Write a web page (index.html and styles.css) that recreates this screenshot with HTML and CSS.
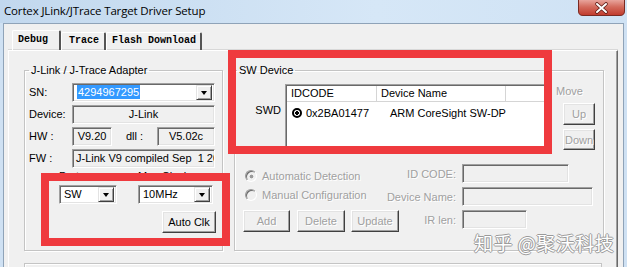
FILE: index.html
```html
<!DOCTYPE html>
<html lang="en">
<head>
  <meta charset="UTF-8" />
  <title>Cortex JLink/JTrace Target Driver Setup</title>
  <link rel="stylesheet" href="styles.css">
</head>
<body>
  <div class="titlebar">
    <span class="title">Cortex JLink/JTrace Target Driver Setup</span>
    <span class="close">
      <svg width="47" height="16" viewBox="0 0 47 16">
        <defs>
          <linearGradient id="cg" x1="0" y1="0" x2="0" y2="1">
            <stop offset="0" stop-color="#e8a49c"/>
            <stop offset="0.45" stop-color="#d36a5c"/>
            <stop offset="1" stop-color="#c0392b"/>
          </linearGradient>
        </defs>
        <path d="M0.5 0 V11 Q0.5 15.5 5 15.5 H42 Q46.5 15.5 46.5 11 V0" fill="url(#cg)" stroke="#7a2a22"/>
        <path d="M19 4 L28 12 M28 4 L19 12" stroke="#5a1a14" stroke-width="3.6" stroke-linecap="round"/>
        <path d="M19 4 L28 12 M28 4 L19 12" stroke="#fff" stroke-width="2" stroke-linecap="round"/>
      </svg>
    </span>
  </div>

  <div class="dialog">
    <div class="tabs">
      <span class="tab active">Debug</span>
      <span class="tab">Trace</span>
      <span class="tab wide">Flash Download</span>
    </div>

    <div class="page">
      <div class="cols">
        <fieldset class="group adapter">
          <legend>J-Link / J-Trace Adapter</legend>
          <div class="adapter-grid">
            <span class="lbl">SN:</span>
            <div class="combo white">
              <span class="combo-text"><span class="sel">4294967295</span></span>
              <span class="drop"><i></i></span>
            </div>
            <span class="lbl">Device:</span>
            <div class="field center">J-Link</div>
            <span class="lbl">HW :</span>
            <div class="hw-row">
              <div class="field center hw">V9.20</div>
              <span class="lbl">dll :</span>
              <div class="field center dll">V5.02c</div>
            </div>
            <span class="lbl">FW :</span>
            <div class="field clip">J-Link V9 compiled Sep&nbsp;&nbsp;1 20</div>
          </div>

          <div class="clock">
            <div class="clock-item port">
              <span class="lbl">Port:</span>
              <div class="combo white">
                <span class="combo-text">SW</span>
                <span class="drop"><i></i></span>
              </div>
            </div>
            <div class="clock-item maxclk">
              <span class="lbl">Max Clock:</span>
              <div class="combo white">
                <span class="combo-text">10MHz</span>
                <span class="drop"><i></i></span>
              </div>
            </div>
          </div>
          <div class="autoclk-row">
            <span class="btn autoclk">Auto Clk</span>
          </div>
        </fieldset>

        <fieldset class="group swdev">
          <legend>SW Device</legend>
          <div class="top-row">
            <span class="swd">SWD</span>
            <div class="listview">
              <div class="lv-head">
                <span class="c1">IDCODE</span>
                <span class="c2">Device Name</span>
                <span class="c3"></span>
              </div>
              <div class="lv-row">
                <span class="c1"><i class="dot"></i>0x2BA01477</span>
                <span class="c2">ARM CoreSight SW-DP</span>
              </div>
            </div>
            <div class="move">
              <span class="dis">Move</span>
              <span class="btn dis up">Up</span>
              <span class="btn dis down">Down</span>
            </div>
          </div>

          <div class="lower-row">
            <div class="detect">
              <div class="radio dis"><i class="rb on"></i>Automatic Detection</div>
              <div class="radio dis"><i class="rb"></i>Manual Configuration</div>
              <div class="btn-row">
                <span class="btn dis add">Add</span>
                <span class="btn dis del">Delete</span>
                <span class="btn dis upd">Update</span>
              </div>
            </div>
            <div class="idgrid">
              <span class="dis">ID CODE:</span>
              <div class="field w1"></div>
              <span class="dis">Device Name:</span>
              <div class="field w2"></div>
              <span class="dis">IR len:</span>
              <div class="field w3"></div>
            </div>
          </div>
        </fieldset>
      </div>

      <div class="next-group"></div>
    </div>
  </div>

  <div class="mark mark-left"></div>
  <div class="mark mark-right"></div>
  <div class="watermark">知乎 @聚沃科技</div>
</body>
</html>
```

FILE: styles.css
```css
:root {
  --face: #f0f0f0;
  --shadow: #a0a0a0;
  --dark: #696969;
  --light: #e3e3e3;
  --disabled: #a0a0a0;
  --mark: #ef3a3e;
}

body {
  margin: 0;
  width: 627px;
  height: 267px;
  overflow: hidden;
  position: relative;
  background: #cfe1f3;
  font: 11px "Liberation Sans", Arial, sans-serif;
  color: #000;
}

.titlebar {
  height: 23px;
  display: flex;
  justify-content: space-between;
  align-items: flex-start;
  background: linear-gradient(to right, #c2d8ee, #d6e7f7 60%, #cfe2f4);
}

.title {
  font: 11.5px "Open Sans", "Noto Sans", sans-serif;
  line-height: 21px;
  padding-left: 4px;
  letter-spacing: -0.15px;
  color: #000;
}

.close {
  display: block;
  width: 47px;
  height: 16px;
  margin-right: 2px;
}

.close svg {
  display: block;
}

.dialog {
  margin-left: 3px;
  width: 621px;
  height: 244px;
  overflow: hidden;
  box-sizing: border-box;
  background: var(--face);
  border: 1px solid #8fa3b8;
  border-bottom: none;
}

/* tabs */
.tabs {
  display: flex;
  margin: 6px 0 0 8px;
  height: 20px;
  align-items: flex-end;
}

.tab {
  height: 18px;
  box-sizing: border-box;
  border-top: 1px solid #fff;
  border-left: 1px solid #fff;
  border-right: 2px solid #555;
  border-radius: 2px 2px 0 0;
  font: bold 10px "Liberation Mono", "Courier New", monospace;
  line-height: 16px;
  padding-left: 7px;
  width: 45px;
}

.tab.active {
  width: 49px;
  height: 20px;
  padding-left: 5px;
  line-height: 18px;
}

.tab.wide {
  width: 96px;
  padding-left: 5px;
}

.page {
  margin-left: 4px;
  width: 610px;
  height: 217px;
  box-sizing: border-box;
  border-top: 1px solid #fff;
  border-left: 1px solid #fff;
  border-right: 1px solid var(--dark);
  box-shadow: inset -1px 0 0 var(--shadow), 0 -1px 0 #d8d8d8;
  padding: 12px 0 0 15px;
  overflow: hidden;
}

.cols {
  display: flex;
  gap: 11px;
}

/* group boxes */
.group {
  margin: 0;
  padding: 0;
  box-sizing: border-box;
  height: 188px;
  border: 1px solid #c4c4c4;
  box-shadow: inset 1px 1px 0 #fff, 1px 1px 0 #fff;
  min-width: 0;
}

.group legend {
  padding: 0 2px;
  margin-left: 4px;
  line-height: 14px;
}

.adapter {
  width: 199px;
}

.swdev {
  width: 370px;
}

.swdev legend {
  margin-left: 2px;
}

.lbl {
  line-height: 19px;
  white-space: nowrap;
}

.adapter-grid {
  display: grid;
  grid-template-columns: 43px 143px;
  grid-auto-rows: 19px;
  row-gap: 3px;
  margin: 6px 0 0 4px;
}

/* sunken fields */
.field {
  height: 19px;
  box-sizing: border-box;
  border-top: 1px solid var(--shadow);
  border-left: 1px solid var(--shadow);
  border-right: 1px solid #fff;
  border-bottom: 1px solid #fff;
  box-shadow: inset 1px 1px 0 var(--dark), inset -1px -1px 0 var(--light);
  line-height: 17px;
  padding: 0 4px;
  white-space: nowrap;
  overflow: hidden;
}

.field.center {
  text-align: center;
}

.field.clip {
  padding-left: 3px;
}

.hw-row {
  display: flex;
  justify-content: space-between;
}

.hw {
  width: 40px;
}

.dll {
  width: 58px;
}

/* combo boxes */
.combo {
  height: 19px;
  box-sizing: border-box;
  display: flex;
  align-items: center;
  border-top: 1px solid var(--shadow);
  border-left: 1px solid var(--shadow);
  border-right: 1px solid #fff;
  border-bottom: 1px solid #fff;
  box-shadow: inset 1px 1px 0 var(--dark), inset -1px -1px 0 var(--light);
  background: #fff;
  padding: 2px;
}

.combo-text {
  flex: 1;
  padding-left: 2px;
  line-height: 15px;
  overflow: hidden;
  white-space: nowrap;
}

.sel {
  background: #3399ff;
  color: #fff;
  padding: 0 1px;
  display: inline-block;
  line-height: 14px;
}

.drop {
  width: 16px;
  height: 15px;
  box-sizing: border-box;
  background: var(--face);
  border-top: 1px solid var(--light);
  border-left: 1px solid var(--light);
  border-right: 1px solid #404040;
  border-bottom: 1px solid #404040;
  box-shadow: inset 1px 1px 0 #fff, inset -1px -1px 0 var(--shadow);
  display: flex;
  justify-content: center;
  align-items: center;
}

.drop i {
  width: 0;
  height: 0;
  border-left: 3px solid transparent;
  border-right: 3px solid transparent;
  border-top: 4px solid #000;
  margin-top: 1px;
}

/* clock */
.clock {
  display: flex;
  gap: 21px;
  margin: 2px 0 0 34px;
}

.clock-item {
  display: flex;
  flex-direction: column;
  gap: 2px;
}

.clock-item .lbl {
  line-height: 13px;
}

.port {
  width: 58px;
}

.maxclk {
  width: 75px;
}

.autoclk-row {
  display: flex;
  justify-content: flex-end;
  padding-right: 6px;
  margin-top: 7px;
}

/* buttons */
.btn {
  display: flex;
  justify-content: center;
  align-items: center;
  box-sizing: border-box;
  background: var(--face);
  border-top: 1px solid #fff;
  border-left: 1px solid #fff;
  border-right: 1px solid #404040;
  border-bottom: 1px solid #404040;
  box-shadow: inset -1px -1px 0 var(--shadow), inset 1px 1px 0 var(--light);
  white-space: nowrap;
}

.autoclk {
  width: 54px;
  height: 22px;
}

.dis {
  color: var(--disabled);
  text-shadow: 1px 1px 0 #fff;
  white-space: nowrap;
}

/* sw device */
.top-row {
  display: flex;
  margin-top: 7px;
  height: 66px;
}

.swd {
  width: 46px;
  text-align: right;
  padding-top: 19px;
  line-height: 14px;
}

.listview {
  margin-left: 4px;
  width: 263px;
  height: 66px;
  box-sizing: border-box;
  background: #fff;
  border-top: 1px solid var(--shadow);
  border-left: 1px solid var(--shadow);
  box-shadow: inset 1px 1px 0 var(--dark);
  overflow: hidden;
}

.lv-head {
  display: flex;
  height: 16px;
  box-sizing: border-box;
  border-bottom: 1px solid #d5d5d5;
  margin-left: 1px;
  margin-top: 1px;
  line-height: 14px;
}

.lv-head span {
  box-sizing: border-box;
  border-right: 1px solid #d5d5d5;
  padding-left: 4px;
}

.c1 {
  width: 90px;
  flex: none;
}

.c2 {
  width: 129px;
  flex: none;
}

.c3 {
  flex: 1;
}

.lv-row {
  display: flex;
  margin-left: 1px;
  margin-top: 4px;
  line-height: 14px;
}

.lv-row .c1 {
  display: flex;
  align-items: center;
  padding-left: 5px;
}

.lv-row .c2 {
  padding-left: 8px;
  width: 160px;
}

.dot {
  width: 10px;
  height: 10px;
  box-sizing: border-box;
  border: 2px solid #000;
  border-radius: 50%;
  margin-right: 4px;
  background: radial-gradient(circle, #000 1.6px, #fff 2px);
}

.move {
  margin-left: 8px;
  width: 40px;
  display: flex;
  flex-direction: column;
  line-height: 14px;
}

.move .btn {
  margin-left: 7px;
  width: 32px;
  height: 22px;
}

.move .up {
  margin-top: 5px;
}

.move .down {
  margin-top: 4px;
  height: 21px;
}

/* lower part */
.lower-row {
  display: flex;
  margin-top: 14px;
}

.detect {
  flex: none;
  width: 132px;
  padding: 2px 0 0 8px;
}

.radio {
  display: flex;
  align-items: center;
  height: 19px;
  padding-left: 2px;
}

.rb {
  width: 12px;
  height: 12px;
  box-sizing: border-box;
  border-radius: 50%;
  border: 1px solid;
  border-color: #9a9a9a #fff #fff #9a9a9a;
  background: var(--face);
  margin-right: 5px;
  box-shadow: inset 1px 1px 0 #6a6a6a;
}

.rb.on {
  background: radial-gradient(circle at 55% 55%, #9a9a9a 1.6px, var(--face) 2.2px);
}

.btn-row {
  display: flex;
  margin-top: 6px;
}

.btn-row .btn {
  height: 22px;
  flex: none;
}

.add {
  width: 47px;
}

.del {
  width: 48px;
  margin-left: 7px;
}

.upd {
  width: 48px;
  margin-left: 6px;
}

.idgrid {
  margin-left: auto;
  margin-right: 10px;
  display: grid;
  grid-template-columns: auto auto;
  grid-auto-rows: 19px;
  column-gap: 6px;
  row-gap: 4px;
  align-items: center;
  justify-items: end;
}

.idgrid .field {
  justify-self: start;
}

.w1 {
  width: 107px;
}

.w2 {
  width: 131px;
}

.w3 {
  width: 65px;
}

.next-group {
  margin-top: 12px;
  width: 576px;
  height: 20px;
  border: 1px solid #c4c4c4;
  box-shadow: inset 1px 1px 0 #fff;
}

/* annotation marks drawn over the dialog */
.mark {
  position: absolute;
  box-sizing: border-box;
  border: 8px solid var(--mark);
}

.mark-left {
  left: 41px;
  top: 173px;
  width: 189px;
  height: 73px;
}

.mark-right {
  left: 228px;
  top: 50px;
  width: 324px;
  height: 104px;
}

.watermark {
  position: absolute;
  left: 474px;
  top: 229px;
  font: 19px "Noto Sans CJK SC", sans-serif;
  color: #fff;
  letter-spacing: 0.5px;
  text-shadow: -1px 0 0 #9a9a9a, 1px 0 0 #9a9a9a, 0 -1px 0 #9a9a9a, 0 1px 0 #9a9a9a;
}
```
